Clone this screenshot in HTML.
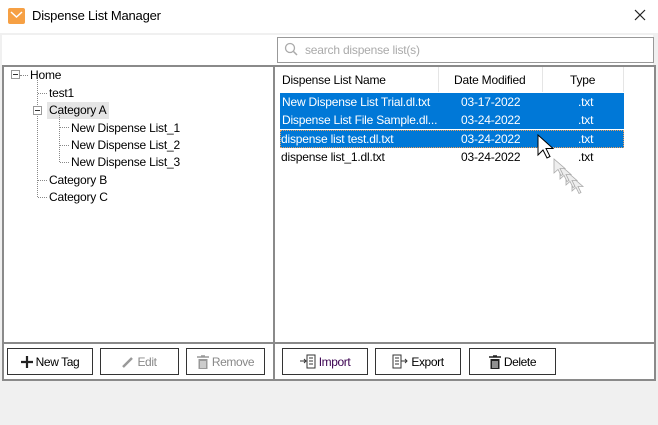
<!DOCTYPE html>
<html><head><style>
body{margin:0;width:658px;height:425px;background:#f0f0f0;font-family:"Liberation Sans",sans-serif;font-size:12px;position:relative;overflow:hidden}
.a{position:absolute}
.t{white-space:nowrap;letter-spacing:-0.2px}
.btn{position:absolute;top:348px;height:27px;border:1px solid #333;background:#fff;box-sizing:border-box;display:flex;align-items:center;justify-content:center;gap:3px;font-size:12px;letter-spacing:-0.4px}
.dis{color:#888}
.row{position:absolute;left:280px;width:344px;height:18px;line-height:18px;font-size:12px}
.sel{background:#0078d7;color:#fff}
</style></head><body>
<div class="a" style="left:0;top:0;width:658px;height:33px;background:#fff"></div>
<div class="a" style="left:8px;top:8px;width:17px;height:16px;background:#f6a044;border-radius:2px"></div>
<svg class="a" style="left:10px;top:11px" width="13" height="8"><path d="M1 1 L6.5 6 L12 1" stroke="#fff" stroke-width="1.5" fill="none"/></svg>
<div class="a t" style="left:32px;top:8px;font-size:13px">Dispense List Manager</div>
<svg class="a" style="left:634px;top:9px" width="12" height="12"><path d="M1 1L11 11M11 1L1 11" stroke="#222" stroke-width="1.2"/></svg>
<div class="a" style="left:2px;top:35px;width:651px;height:30px;background:#fff"></div>
<div class="a" style="left:277px;top:37px;width:375px;height:24px;border:1px solid #999;background:#fff"></div>
<svg class="a" style="left:284px;top:42px" width="14" height="14"><circle cx="6" cy="6" r="4.5" stroke="#aaa" fill="none" stroke-width="1.3"/><path d="M9.5 9.5L13 13" stroke="#aaa" stroke-width="1.5"/></svg>
<div class="a t" style="left:305px;top:43px;color:#aaa">search dispense list(s)</div>
<div class="a" style="left:2px;top:65px;border:2px solid #8a8a8a;background:#fff;width:650px;height:312px"></div>
<div class="a" style="left:273px;top:65px;width:2px;height:316px;background:#8a8a8a"></div>
<div class="a" style="left:2px;top:342px;width:654px;height:2px;background:#8a8a8a"></div>
<!-- tree -->
<div class="a" style="left:11px;top:70px;width:9px;height:9px;border:1px solid #999;box-sizing:border-box;background:#fff"></div>
<div class="a" style="left:13px;top:74px;width:5px;height:1px;background:#333"></div>
<div class="a" style="left:20px;top:75px;width:8px;border-top:1px dotted #888"></div>
<div class="a t" style="left:30px;top:68px">Home</div>
<div class="a" style="left:37px;top:80px;height:117px;border-left:1px dotted #888"></div>
<div class="a" style="left:38px;top:93px;width:9px;border-top:1px dotted #888"></div>
<div class="a t" style="left:49px;top:86px">test1</div>
<div class="a" style="left:33px;top:106px;width:9px;height:9px;border:1px solid #999;box-sizing:border-box;background:#fff"></div>
<div class="a" style="left:35px;top:110px;width:5px;height:1px;background:#333"></div>
<div class="a" style="left:47px;top:102px;width:62px;height:17px;background:#e5e5e5"></div>
<div class="a t" style="left:49px;top:103px">Category A</div>
<div class="a" style="left:59px;top:115px;height:47px;border-left:1px dotted #888"></div>
<div class="a" style="left:60px;top:127px;width:9px;border-top:1px dotted #888"></div>
<div class="a" style="left:60px;top:145px;width:9px;border-top:1px dotted #888"></div>
<div class="a" style="left:60px;top:162px;width:9px;border-top:1px dotted #888"></div>
<div class="a t" style="left:71px;top:121px">New Dispense List_1</div>
<div class="a t" style="left:71px;top:138px">New Dispense List_2</div>
<div class="a t" style="left:71px;top:155px">New Dispense List_3</div>
<div class="a" style="left:38px;top:180px;width:9px;border-top:1px dotted #888"></div>
<div class="a" style="left:38px;top:197px;width:9px;border-top:1px dotted #888"></div>
<div class="a t" style="left:49px;top:173px">Category B</div>
<div class="a t" style="left:49px;top:190px">Category C</div>
<!-- list header -->
<div class="a" style="left:438px;top:67px;width:1px;height:25px;background:#e5e5e5"></div>
<div class="a" style="left:542px;top:67px;width:1px;height:25px;background:#e5e5e5"></div>
<div class="a" style="left:623px;top:67px;width:1px;height:25px;background:#e5e5e5"></div>
<div class="a t" style="left:282px;top:73px">Dispense List Name</div>
<div class="a t" style="left:454px;top:73px">Date Modified</div>
<div class="a t" style="left:570px;top:73px">Type</div>
<div class="row sel" style="top:93px"><span class="a t" style="left:2px">New Dispense List Trial.dl.txt</span><span class="a t" style="left:181px">03-17-2022</span><span class="a t" style="left:298px">.txt</span></div>
<div class="row sel" style="top:111px"><span class="a t" style="left:2px">Dispense List File Sample.dl...</span><span class="a t" style="left:181px">03-24-2022</span><span class="a t" style="left:298px">.txt</span></div>
<div class="row sel" style="top:130px;outline:1px dotted #e8a060;outline-offset:-1px"><span class="a t" style="left:1px">dispense list test.dl.txt</span><span class="a t" style="left:181px">03-24-2022</span><span class="a t" style="left:298px">.txt</span></div>
<div class="row" style="top:148px"><span class="a t" style="left:1px">dispense list_1.dl.txt</span><span class="a t" style="left:181px">03-24-2022</span><span class="a t" style="left:298px">.txt</span></div>
<!-- cursor -->
<svg class="a" style="left:534px;top:133px" width="60" height="70">
<g fill="#eee" stroke="#aaa" stroke-width="0.8"><path d="M38 44 l0 14 l4-3.5 l3 6 l2-1 l-3-6 l5 0z"/><path d="M32 38 l0 14 l4-3.5 l3 6 l2-1 l-3-6 l5 0z"/><path d="M26 32 l0 14 l4-3.5 l3 6 l2-1 l-3-6 l5 0z"/><path d="M20 26 l0 14 l4-3.5 l3 6 l2-1 l-3-6 l5 0z"/></g>
<path d="M4 2 l0 20 l5-5 l4 8 l3-1.5 l-4-8 l7 0z" fill="#fff" stroke="#000" stroke-width="1"/></svg>
<!-- buttons -->
<div class="btn" style="left:7px;width:86px"><svg width="12" height="12"><path d="M6 0V12M0 6H12" stroke="#222" stroke-width="2.2"/></svg>New Tag</div>
<div class="btn dis" style="left:100px;width:79px"><svg width="12" height="12"><path d="M1 11L10 2" stroke="#999" stroke-width="2.5"/></svg>Edit</div>
<div class="btn dis" style="left:186px;width:79px"><svg width="12" height="14"><path d="M0 2H12M4 1H8" stroke="#999" stroke-width="1.5"/><rect x="1.5" y="4" width="9" height="10" fill="#999"/><path d="M4 6V13M6 6V13M8 6V13" stroke="#fff"/></svg>Remove</div>
<div class="btn" style="left:282px;width:86px"><svg width="16" height="15"><path d="M0 7H6M4 5L6 7L4 9" stroke="#333" fill="none"/><rect x="7" y="1" width="8" height="13" fill="none" stroke="#333"/><path d="M9 4H13M9 7H13M9 10H13" stroke="#333"/></svg><span style="color:#3a0050">Import</span></div>
<div class="btn" style="left:375px;width:86px"><svg width="16" height="15"><rect x="1" y="1" width="8" height="13" fill="none" stroke="#333"/><path d="M3 4H7M3 7H7M3 10H7M9 7H15M13 5L15 7L13 9" stroke="#333" fill="none"/></svg>Export</div>
<div class="btn" style="left:469px;width:87px"><svg width="12" height="14"><path d="M0 2H12M4 1H8" stroke="#222" stroke-width="1.5"/><rect x="1.5" y="4" width="9" height="10" fill="#222"/><path d="M4 6V13M6 6V13M8 6V13" stroke="#fff"/></svg>Delete</div>
</body></html>
